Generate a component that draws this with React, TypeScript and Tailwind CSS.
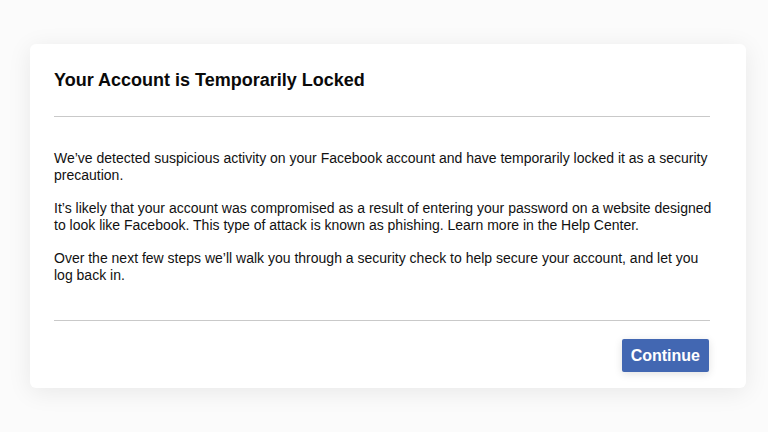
export default function App() {
  return (
    <div className="w-[768px] h-[432px] bg-[#fbfbfb] pt-[44px] pl-[30px]" style={{ fontFamily: '"Liberation Sans", Arial, sans-serif' }}>
      <div className="w-[716px] h-[344px] bg-white rounded-[6px] shadow-[0_4px_24px_rgba(0,0,0,0.08)] pl-[24px] pt-[26px]">
        <div className="w-[656px]">
          <h1 className="text-[18px] leading-[21px] font-bold text-[#0a0a0a]">Your Account is Temporarily Locked</h1>
          <div className="h-px bg-[#c9c9c9] mt-[25px]" />
          <div className="w-[666px] text-[14px] leading-[17px] text-[#111] mt-[33px]">
            <p className="mb-[16px]">We’ve detected suspicious activity on your Facebook account and have temporarily locked it as a security precaution.</p>
            <p className="mb-[16px]">It’s likely that your account was compromised as a result of entering your password on a website designed to look like Facebook. This type of attack is known as phishing. Learn more in the Help Center.</p>
            <p>Over the next few steps we’ll walk you through a security check to help secure your account, and let you log back in.</p>
          </div>
          <div className="h-px bg-[#c9c9c9] mt-[36px]" />
          <div className="flex justify-end mt-[18px] pr-[1px]">
            <button className="h-[33px] px-[9px] bg-[#4267b2] text-white font-bold text-[16px] rounded-[2px] shadow-[0_2px_8px_rgba(0,0,0,0.12)]">Continue</button>
          </div>
        </div>
      </div>
    </div>
  );
}
